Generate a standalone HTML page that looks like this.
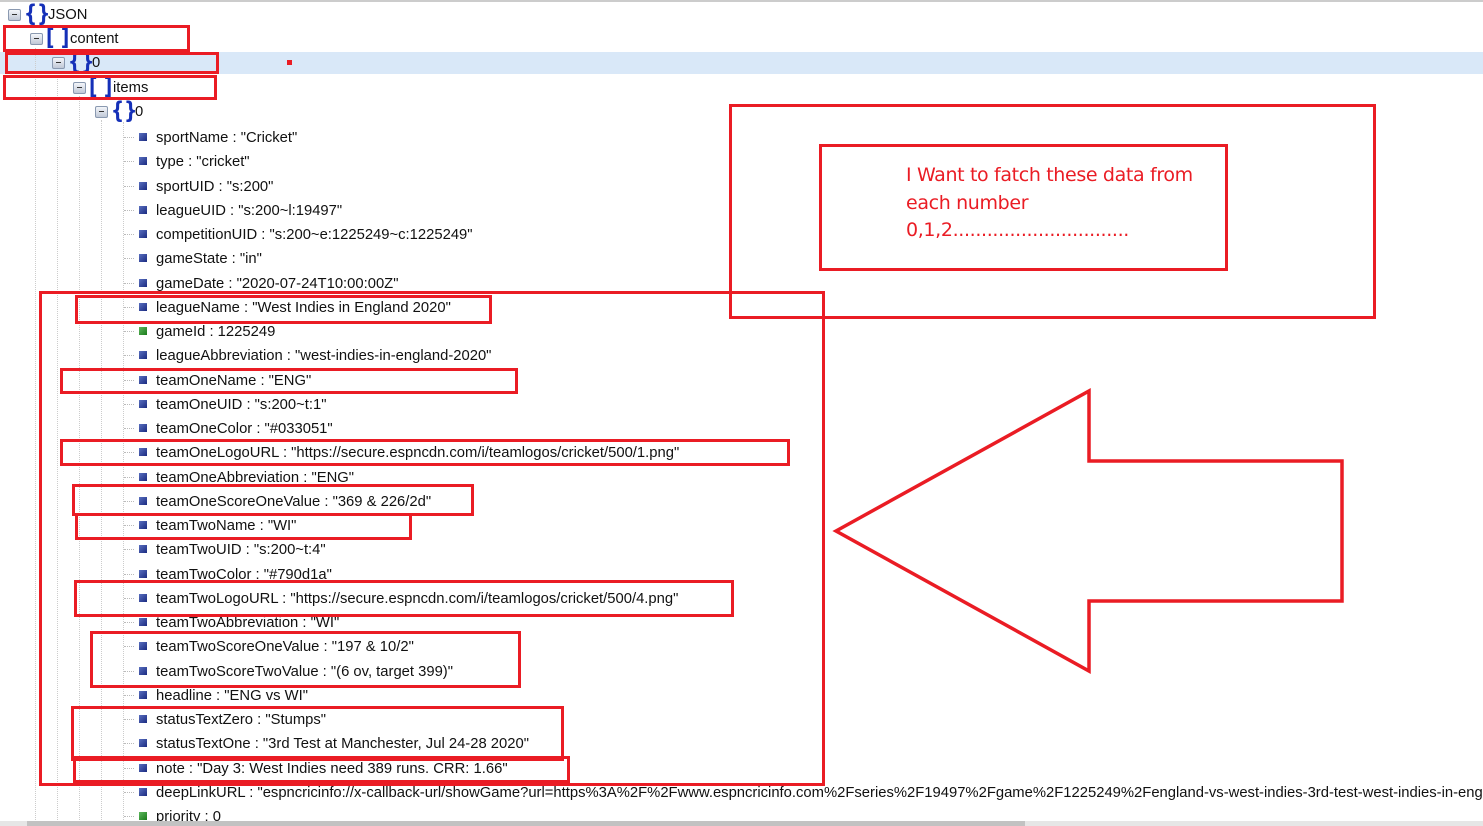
<!DOCTYPE html>
<html><head><meta charset="utf-8"><style>
body{margin:0;width:1483px;height:826px;overflow:hidden;background:#fff;font-family:"Liberation Sans",Arial,sans-serif;position:relative}
.a{position:absolute}
.t{position:absolute;font-size:14.8px;color:#111;white-space:nowrap;line-height:18px}
.sq{position:absolute;width:8px;height:8px;background:linear-gradient(135deg,#5a70c0,#1a2a80)}
.g{background:linear-gradient(135deg,#5fb85f,#1a7a1a)}
.hd{position:absolute;width:10px;border-top:1px dotted #bbb}
.vd{position:absolute;border-left:1px dotted #ccc}
.ex{position:absolute;width:11px;height:10px;border:1px solid #8a99b0;background:linear-gradient(#f4f6fa,#c0c8d6);border-radius:2px}
.ex:after{content:"";position:absolute;left:3px;top:4px;width:5px;height:1px;background:#333}
.br{position:absolute;color:#1530b8;font-weight:600;font-size:23px;line-height:22px;font-family:"DejaVu Sans",sans-serif;transform:scaleX(0.8);transform-origin:left}
.r{position:absolute;border:3.5px solid #ea1c24;box-sizing:border-box}
</style></head><body>
<div class="a" style="left:0;top:0;width:1483px;height:2px;background:#ccc"></div>
<div class="a" style="left:0;top:52px;width:1483px;height:22px;background:#d9e8f8"></div>
<div class="vd" style="left:35px;top:48px;height:778px"></div>
<div class="vd" style="left:57px;top:72px;height:754px"></div>
<div class="vd" style="left:79px;top:96px;height:730px"></div>
<div class="vd" style="left:101px;top:120px;height:706px"></div>
<div class="vd" style="left:123px;top:122px;height:704px"></div>

<div class="ex" style="left:8px;top:9px"></div><div class="br" style="left:24px;top:3px">{}</div><div class="t" style="left:48px;top:6px">JSON</div>
<div class="ex" style="left:30px;top:33px"></div><div class="br" style="left:46px;top:27px">[ ]</div><div class="t" style="left:70px;top:30px">content</div>
<div class="ex" style="left:52px;top:57px"></div><div class="br" style="left:68px;top:51px">{}</div><div class="t" style="left:92px;top:54px">0</div>
<div class="ex" style="left:73px;top:82px"></div><div class="br" style="left:89px;top:76px">[ ]</div><div class="t" style="left:113px;top:79px">items</div>
<div class="ex" style="left:95px;top:106px"></div><div class="br" style="left:111px;top:100px">{}</div><div class="t" style="left:135px;top:103px">0</div>

<div id="rows"></div>
<script>
var L=[['sportName : "Cricket"'],['type : "cricket"'],['sportUID : "s:200"'],['leagueUID : "s:200~l:19497"'],['competitionUID : "s:200~e:1225249~c:1225249"'],['gameState : "in"'],['gameDate : "2020-07-24T10:00:00Z"'],['leagueName : "West Indies in England 2020"'],['gameId : 1225249',1],['leagueAbbreviation : "west-indies-in-england-2020"'],['teamOneName : "ENG"'],['teamOneUID : "s:200~t:1"'],['teamOneColor : "#033051"'],['teamOneLogoURL : "https://secure.espncdn.com/i/teamlogos/cricket/500/1.png"'],['teamOneAbbreviation : "ENG"'],['teamOneScoreOneValue : "369 &amp; 226/2d"'],['teamTwoName : "WI"'],['teamTwoUID : "s:200~t:4"'],['teamTwoColor : "#790d1a"'],['teamTwoLogoURL : "https://secure.espncdn.com/i/teamlogos/cricket/500/4.png"'],['teamTwoAbbreviation : "WI"'],['teamTwoScoreOneValue : "197 &amp; 10/2"'],['teamTwoScoreTwoValue : "(6 ov, target 399)"'],['headline : "ENG vs WI"'],['statusTextZero : "Stumps"'],['statusTextOne : "3rd Test at Manchester, Jul 24-28 2020"'],['note : "Day 3: West Indies need 389 runs. CRR: 1.66"'],['deepLinkURL : "espncricinfo://x-callback-url/showGame?url=https%3A%2F%2Fwww.espncricinfo.com%2Fseries%2F19497%2Fgame%2F1225249%2Fengland-vs-west-indies-3rd-test-west-indies-in-england-2020"'],['priority : 0',1]];
var h='';for(var i=0;i<L.length;i++){var c=137+i*24.25;h+='<div class="hd" style="left:124px;top:'+Math.round(c)+'px"></div><div class="sq'+(L[i][1]?' g':'')+'" style="left:139px;top:'+Math.round(c-4)+'px"></div><div class="t" style="left:156px;top:'+Math.round(c-8)+'px">'+L[i][0]+'</div>';}
document.getElementById('rows').innerHTML=h;
</script>

<div class="a" style="left:0;top:821px;width:1483px;height:5px;background:#e6e6e6"></div>
<div class="a" style="left:27px;top:821px;width:998px;height:5px;background:#c2c2c2"></div>

<div class="r" style="left:3px;top:25px;width:187px;height:27px"></div>
<div class="r" style="left:5px;top:52px;width:214px;height:22px"></div>
<div class="r" style="left:3px;top:75px;width:214px;height:25px"></div>
<div class="a" style="left:287px;top:60px;width:5px;height:5px;background:#ea1c24"></div>
<div class="r" style="left:729px;top:104px;width:647px;height:215px"></div>
<div class="r" style="left:819px;top:144px;width:409px;height:127px"></div>
<div class="a" style="left:906px;top:162px;color:#ea1c24;font-size:19px;line-height:27.5px;font-family:'DejaVu Sans','Liberation Sans',sans-serif;letter-spacing:-0.35px">I Want to fatch these data from<br>each number<br>0,1,2...............................</div>
<div class="r" style="left:39px;top:291px;width:786px;height:495px"></div>
<div class="r" style="left:75px;top:295px;width:417px;height:29px"></div>
<div class="r" style="left:60px;top:368px;width:458px;height:26px"></div>
<div class="r" style="left:60px;top:439px;width:730px;height:27px"></div>
<div class="r" style="left:72px;top:484px;width:402px;height:32px"></div>
<div class="r" style="left:75px;top:513px;width:337px;height:27px"></div>
<div class="r" style="left:74px;top:580px;width:660px;height:37px"></div>
<div class="r" style="left:90px;top:631px;width:431px;height:57px"></div>
<div class="r" style="left:71px;top:706px;width:493px;height:55px"></div>
<div class="r" style="left:73px;top:756px;width:497px;height:27px"></div>
<svg class="a" style="left:0;top:0" width="1483" height="826"><polygon points="836,531 1089,391 1089,461 1342,461 1342,601 1089,601 1089,671" fill="none" stroke="#ea1c24" stroke-width="3.5"/></svg>
</body></html>
